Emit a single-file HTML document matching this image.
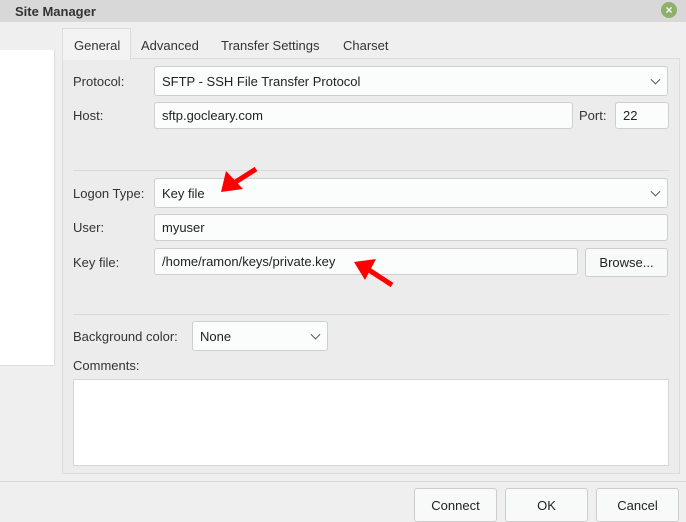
<!DOCTYPE html>
<html><head><style>
*{box-sizing:border-box;margin:0;padding:0}
body{width:686px;height:517px;overflow:hidden;background:#efefef;font-family:"Liberation Sans","DejaVu Sans",sans-serif;font-size:13px;color:#333;position:relative}
.a{position:absolute}
.title{left:0;top:0;width:686px;height:22px;background:#d8d8d8;font-weight:bold;font-size:13px;padding:4px 0 0 15px;color:#333}
.close{left:661px;top:2px;width:16px;height:16px;border-radius:50%;background:#8db06a;color:#fff;font-size:12px;line-height:16px;text-align:center;font-weight:bold}
.field{background:#fbfcfc;border:1px solid #cfcfcf;border-radius:3px;padding-left:7px;display:flex;align-items:center;color:#222}
.chev{position:absolute;right:8px;top:50%;width:7px;height:7px;border-right:1.5px solid #555;border-bottom:1.5px solid #555;transform:translateY(-70%) rotate(45deg)}
.lbl{color:#333}
.btn{background:#f8f9f9;border:1px solid #cdcdcd;border-radius:3px;display:flex;align-items:center;justify-content:center;color:#222}
.sep{height:1px;background:#dadada}
</style></head><body>
<div class="a title">Site Manager</div>
<div class="a close">×</div>
<div class="a" style="left:0;top:50px;width:55px;height:316px;background:#fff;border-right:1px solid #ddd;border-bottom:1px solid #ddd"></div>
<div class="a" style="left:62px;top:58px;width:618px;height:416px;border:1px solid #dcdcdc;background:#ececec"></div>
<div class="a" style="left:62px;top:28px;width:69px;height:32px;background:#f3f3f3;border:1px solid #dcdcdc;border-bottom:none;padding:9px 0 0 11px">General</div>
<div class="a" style="left:141px;top:38px">Advanced</div>
<div class="a" style="left:221px;top:38px">Transfer Settings</div>
<div class="a" style="left:343px;top:38px">Charset</div>

<div class="a lbl" style="left:73px;top:74px">Protocol:</div>
<div class="a field" style="left:154px;top:66px;width:514px;height:30px">SFTP - SSH File Transfer Protocol<span class="chev"></span></div>
<div class="a lbl" style="left:73px;top:108px">Host:</div>
<div class="a field" style="left:154px;top:102px;width:419px;height:27px">sftp.gocleary.com</div>
<div class="a lbl" style="left:579px;top:108px">Port:</div>
<div class="a field" style="left:615px;top:102px;width:54px;height:27px">22</div>
<div class="a sep" style="left:73px;top:170px;width:596px"></div>
<div class="a lbl" style="left:73px;top:186px">Logon Type:</div>
<div class="a field" style="left:154px;top:178px;width:514px;height:30px">Key file<span class="chev"></span></div>
<div class="a lbl" style="left:73px;top:220px">User:</div>
<div class="a field" style="left:154px;top:214px;width:514px;height:27px">myuser</div>
<div class="a lbl" style="left:73px;top:255px">Key file:</div>
<div class="a field" style="left:154px;top:248px;width:424px;height:27px">/home/ramon/keys/private.key</div>
<div class="a btn" style="left:585px;top:248px;width:83px;height:29px">Browse...</div>
<div class="a sep" style="left:73px;top:314px;width:596px"></div>
<div class="a lbl" style="left:73px;top:329px">Background color:</div>
<div class="a field" style="left:192px;top:321px;width:136px;height:30px">None<span class="chev"></span></div>
<div class="a lbl" style="left:73px;top:358px">Comments:</div>
<div class="a" style="left:73px;top:379px;width:596px;height:87px;background:#fff;border:1px solid #d6d6d6"></div>
<div class="a sep" style="left:0;top:481px;width:686px"></div>
<div class="a btn" style="left:414px;top:488px;width:83px;height:34px">Connect</div>
<div class="a btn" style="left:505px;top:488px;width:83px;height:34px">OK</div>
<div class="a btn" style="left:596px;top:488px;width:83px;height:34px">Cancel</div>

<svg class="a" style="left:0;top:0" width="686" height="517">
<line x1="256" y1="169" x2="234" y2="183" stroke="#f00" stroke-width="5"/>
<polygon points="221,192 226,171 243,189" fill="#f00"/>
<line x1="392" y1="285" x2="369" y2="270" stroke="#f00" stroke-width="5"/>
<polygon points="354,262 376,259 365,280" fill="#f00"/>
</svg>
</body></html>
